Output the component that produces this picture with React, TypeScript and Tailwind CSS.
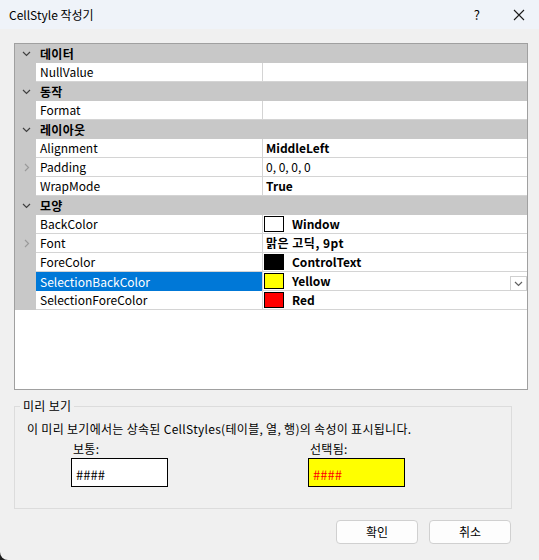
import React from "react";

const FONT = { fontFamily: "'Noto Sans CJK KR', 'Noto Sans', sans-serif" };

function ChevDown({ color = "#404040" }: { color?: string }) {
  return (
    <svg width="9" height="6" viewBox="0 0 9 6" className="block">
      <path d="M1 1 L4.5 4.5 L8 1" fill="none" stroke={color} strokeWidth="1.2" />
    </svg>
  );
}

function ChevRight() {
  return (
    <svg width="6" height="9" viewBox="0 0 6 9" className="block">
      <path d="M1 1 L4.5 4.5 L1 8" fill="none" stroke="#9a9a9a" strokeWidth="1.2" />
    </svg>
  );
}

function Category({ label }: { label: string }) {
  return (
    <div className="flex h-[19px] items-center bg-[#c8c8c8]">
      <div className="flex w-[21px] shrink-0 justify-center pl-[1px]">
        <ChevDown />
      </div>
      <div className="pl-[4px] text-[12px] font-bold leading-none tracking-[0.3px] text-black">{label}</div>
    </div>
  );
}

type Prop = {
  name: string;
  value: string;
  bold?: boolean;
  korean?: boolean;
  swatch?: string;
  expand?: boolean;
  selected?: boolean;
};

function PropRow({ name, value, bold, korean, swatch, expand, selected }: Prop) {
  return (
    <div className="flex h-[19px]">
      <div className="flex w-[21px] shrink-0 items-center justify-center bg-[#c8c8c8] pl-[2px]">
        {expand ? <ChevRight /> : null}
      </div>
      <div
        className={
          selected
            ? "flex w-[226px] shrink-0 items-center bg-[#0078d7] pl-[4px] text-[12px] leading-none text-white"
            : "flex w-[226px] shrink-0 items-center border-b border-[#d4d4d4] pl-[4px] text-[12px] leading-none text-black"
        }
      >
        {name}
      </div>
      <div className="w-px shrink-0 bg-[#d4d4d4]" />
      <div className="relative flex min-w-0 flex-1 items-center border-b border-[#d4d4d4] text-[12px] leading-none text-black">
        {swatch ? (
          <>
            <div className="ml-[1px] h-[16px] w-[20px] shrink-0 border border-black" style={{ backgroundColor: swatch }} />
            <span className="ml-[8px] font-bold">{value}</span>
          </>
        ) : (
          <span className={korean ? "ml-[3px] font-bold tracking-[0.5px]" : bold ? "ml-[3px] font-bold" : "ml-[3px]"}>{value}</span>
        )}
        {selected ? (
          <div className="absolute right-0 top-[4px] flex h-[15px] w-[17px] items-center justify-center border border-[#d0d0d0] bg-white">
            <ChevDown color="#606060" />
          </div>
        ) : null}
      </div>
    </div>
  );
}

export default function App() {
  return (
    <div className="h-[560px] w-[539px] bg-[#1c1c1c]" style={FONT}>
      <div className="flex h-[560px] w-[539px] flex-col overflow-hidden rounded-bl-[8px] bg-[#f0f0f0]">
        {/* title bar */}
        <div className="flex h-[29px] shrink-0 items-center bg-[#eff3f9]">
          <div className="pl-[9px] text-[12px] leading-none text-black">CellStyle 작성기</div>
          <div className="ml-auto mr-[33px] text-[13px] leading-none text-black">?</div>
          <div className="mr-[14px]">
            <svg width="12" height="12" viewBox="0 0 12 12" className="block">
              <path d="M1 1 L11 11 M11 1 L1 11" stroke="#1a1a1a" strokeWidth="1.1" />
            </svg>
          </div>
        </div>

        {/* property grid */}
        <div className="ml-[14px] mt-[14px] h-[347px] w-[514px] shrink-0 border border-[#a0a0a0] bg-white">
          <Category label="데이터" />
          <PropRow name="NullValue" value="" />
          <Category label="동작" />
          <PropRow name="Format" value="" />
          <Category label="레이아웃" />
          <PropRow name="Alignment" value="MiddleLeft" bold />
          <PropRow name="Padding" value="0, 0, 0, 0" expand />
          <PropRow name="WrapMode" value="True" bold />
          <Category label="모양" />
          <PropRow name="BackColor" value="Window" swatch="#ffffff" />
          <PropRow name="Font" value="맑은 고딕, 9pt" bold korean expand />
          <PropRow name="ForeColor" value="ControlText" swatch="#000000" />
          <PropRow name="SelectionBackColor" value="Yellow" swatch="#ffff00" selected />
          <PropRow name="SelectionForeColor" value="Red" swatch="#ff0000" />
        </div>

        {/* preview group */}
        <fieldset className="ml-[14px] mt-[9px] h-[110px] w-[498px] shrink-0 border border-[#dcdcdc]">
          <legend className="ml-[5px] px-[3px] text-[12px] leading-[14px] tracking-[0.3px] text-black">미리 보기</legend>
          <div className="ml-[12px] mt-[10px] text-[12px] leading-none tracking-[0.3px] text-black">
            이 미리 보기에서는 상속된 CellStyles(테이블, 열, 행)의 속성이 표시됩니다.
          </div>
          <div className="mt-[8px] flex">
            <div className="ml-[56px] flex flex-col">
              <div className="pl-[2px] text-[12px] leading-none tracking-[0.3px] text-black">보통:</div>
              <div className="mt-[3px] flex h-[29px] w-[97px] items-center border-[1.5px] border-black bg-white pl-[4px] pt-[4px] text-[13px] leading-none text-black">
                ####
              </div>
            </div>
            <div className="ml-[140px] flex flex-col">
              <div className="pl-[2px] text-[12px] leading-none tracking-[0.3px] text-black">선택됨:</div>
              <div className="mt-[3px] flex h-[29px] w-[97px] items-center border-[1.5px] border-black bg-[#ffff00] pl-[4px] pt-[4px] text-[13px] leading-none text-[#ff0000]">
                ####
              </div>
            </div>
          </div>
        </fieldset>

        {/* buttons */}
        <div className="mr-[28px] mt-[11px] flex justify-end gap-[11px]">
          <button className="flex h-[24px] w-[82px] items-center justify-center rounded-[4px] border border-[#d0d0d0] bg-[#fdfdfd] text-[12px] leading-none text-black">
            확인
          </button>
          <button className="flex h-[24px] w-[82px] items-center justify-center rounded-[4px] border border-[#d0d0d0] bg-[#fdfdfd] text-[12px] leading-none text-black">
            취소
          </button>
        </div>
      </div>
    </div>
  );
}
